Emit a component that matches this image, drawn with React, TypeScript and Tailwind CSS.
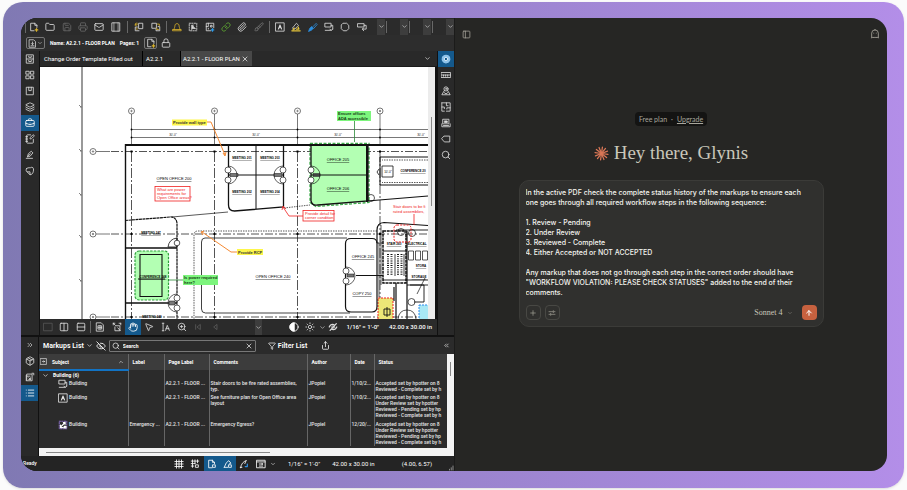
import type { ReactNode } from "react";
import {
  ArrowUp,
  Brush,
  BriefcaseBusiness,
  ChevronDown,
  ChevronUp,
  ChevronsLeft,
  ChevronsRight,
  Columns2,
  EyeOff,
  Filter,
  Folder,
  Ghost,
  Hand,
  Layers,
  Link,
  List,
  Lock,
  Mail,
  MousePointer2,
  NotebookPen,
  Package,
  PanelLeft,
  Paperclip,
  Plus,
  Printer,
  Rows2,
  Save,
  Search,
  Share,
  Sun,
  X,
  ZoomIn,
} from "lucide-react";

const PROMPT = `In the active PDF check the complete status history of the markups to ensure each
one goes through all required workflow steps in the following sequence:

1. Review - Pending
2. Under Review
3. Reviewed - Complete
4. Either Accepted or NOT ACCEPTED

Any markup that does not go through each step in the correct order should have
"WORKFLOW VIOLATION: PLEASE CHECK STATUSES" added to the end of their
comments.`;

const ICON = "size-[10px]";

function Glyph({ children, className = ICON }: { children: ReactNode; className?: string }) {
  return (
    <svg
      viewBox="0 0 24 24"
      fill="none"
      stroke="currentColor"
      strokeWidth="2"
      strokeLinecap="round"
      strokeLinejoin="round"
      className={className}
      aria-hidden="true"
    >
      {children}
    </svg>
  );
}

function Tool({
  label,
  children,
  active = false,
  className = "",
}: {
  label: string;
  children: ReactNode;
  active?: boolean;
  className?: string;
}) {
  return (
    <button
      type="button"
      aria-label={label}
      className={`flex h-4 min-w-0 items-center justify-center ${active ? "bg-[#14598c] text-white" : ""} ${className}`}
    >
      {children}
    </button>
  );
}

function Divider({ className = "" }: { className?: string }) {
  return <span className={`h-3 w-px shrink-0 bg-[#686868] ${className}`} />;
}

function NewFileIcon() {
  return (
    <Glyph>
      <path d="M12 21H4V3h10l5 5v5M14 3v5h5" />
      <path d="M18 16v6M15 19h6" stroke="#d8b12a" strokeWidth="3" />
    </Glyph>
  );
}

function PageIcon() {
  return (
    <Glyph>
      <rect x="3" y="2" width="18" height="20" />
      <path d="M7 2v20M17 2v20" strokeWidth="1.5" />
    </Glyph>
  );
}

function RotateLeftIcon() {
  return (
    <Glyph>
      <path d="M12 3h9v13h-9zM8 12H3v9h9" />
      <path d="M3 9V5h6M6 2 3 5l3 3M7 14v4" stroke="#d8b12a" />
    </Glyph>
  );
}

function RotateRightIcon() {
  return (
    <Glyph>
      <path d="M3 3h10v12H3zM17 11h4v10h-9v-3" />
      <path d="M15 5h5v4M14 14v4h4" stroke="#d8b12a" />
    </Glyph>
  );
}

function StampIcon() {
  return (
    <Glyph>
      <path d="M2 18h20v3H2zM5 18c0-4 2-5 2-9 0-3 2-5 5-5s5 2 5 5c0 4 2 5 2 9" stroke="#d8b12a" />
    </Glyph>
  );
}

function SelectIcon() {
  return (
    <Glyph>
      <rect x="3" y="3" width="18" height="18" strokeDasharray="3 3" />
      <path d="M9 8v10l3-3 5 1zM12 7v3" fill="currentColor" />
    </Glyph>
  );
}

function SnapshotIcon() {
  return (
    <Glyph>
      <path d="M14 21H3V3h18v11M8 3v8H3M14 8h3v4h-3zM8 15v2" />
      <path d="M18 16v6M15 19h6" stroke="#2d9be8" strokeWidth="3" />
    </Glyph>
  );
}

function TextBoxIcon({ className = ICON }: { className?: string }) {
  return (
    <Glyph className={className}>
      <rect x="2" y="2" width="20" height="20" />
      <path d="m8 17 4-10 4 10M9.500 14h5" strokeWidth="2.500" />
    </Glyph>
  );
}

function HighlightIcon() {
  return (
    <Glyph>
      <path d="M4 14 13 3l5 5-9 9z" stroke="#cfcfcf" />
      <path d="M2 21h20M5 18l3-3M13 17h6l-2-5" stroke="#e2c23a" strokeWidth="3" />
    </Glyph>
  );
}

function BluePenIcon() {
  return (
    <Glyph>
      <path d="M2 22c1-7 4-9 7-11l4 4c-3 4-6 6-11 7z" stroke="#2d8fe0" fill="#2d8fe0" />
      <path d="M12 11 20 3M14 15l8-9" stroke="#2d8fe0" />
    </Glyph>
  );
}

function CalloutIcon({ className = ICON }: { className?: string }) {
  return (
    <Glyph className={className}>
      <path d="M3 3h14v9H3zM3 20h14M17 8h4v9M14 17l3 3 4-3" />
    </Glyph>
  );
}

function PlanIcon() {
  return (
    <Glyph>
      <path d="M2 2h20v20h-9M8 22H2V2M2 12h6v4M13 2v7h4M22 14h-8v3" />
    </Glyph>
  );
}

function OctagonIcon() {
  return (
    <Glyph>
      <path d="M8 3h8l5 5v8l-5 5H8l-5-5V8z" />
    </Glyph>
  );
}

function ShapeArrowIcon() {
  return (
    <Glyph>
      <path d="M2 4h15v8H2zM17 8h5v9h-9M16 14l-3 3 3 4" />
    </Glyph>
  );
}

function ThumbnailsIcon() {
  return (
    <Glyph>
      <path d="M3 3h7v7H3zM14 3h7v7h-7zM3 14h7v7H3zM14 14h7v7h-7z" />
    </Glyph>
  );
}

function DrawerIcon() {
  return (
    <Glyph>
      <path d="M4 2h16v20H4zM4 12h16M9 5v3h6V5M9 15v3h6v-3" />
    </Glyph>
  );
}

function PenIcon() {
  return (
    <Glyph>
      <path d="M3 20h15M6 16l2-7 7-6 4 4-6 7zM8 14l5-5" />
    </Glyph>
  );
}

function BlobIcon() {
  return (
    <Glyph>
      <path d="M4 6c4-4 8 0 12-3 5 0 5 6 4 10-1 5-4 8-8 8v-7H5c-3-2-3-5-1-8zM5 14l7 7" />
    </Glyph>
  );
}

function GearIcon() {
  return (
    <Glyph>
      <circle cx="12" cy="12" r="9" fill="#8fc3ea" stroke="#8fc3ea" strokeDasharray="4 2" strokeWidth="3" />
      <circle cx="12" cy="12" r="4" fill="#14598c" stroke="#e8f4fd" />
    </Glyph>
  );
}

function RulerIcon() {
  return (
    <Glyph>
      <path d="M1 6h22v12H1zM1 12h22M6 12v3M11 12v3M16 12v3" />
    </Glyph>
  );
}

function PlacesIcon() {
  return (
    <Glyph>
      <circle cx="12" cy="7" r="5" />
      <circle cx="12" cy="7" r="1" />
      <path d="m8 11-6 10h20l-6-10M8 16l4 3 4-3" />
    </Glyph>
  );
}

function StudioIcon() {
  return (
    <Glyph>
      <path d="M5 3h14v11H5zM2 14v7h20v-7M6 18h12" />
      <path d="M9 7h6v4H9z" fill="currentColor" />
    </Glyph>
  );
}

function TagIcon() {
  return (
    <Glyph>
      <path d="M8 5h13v14H8l-6-7z" />
    </Glyph>
  );
}

function PageFitIcon() {
  return (
    <Glyph>
      <path d="M4 2h11l5 5v15H4zM8 9h8v8H8zM12 9v8M8 13h8" />
    </Glyph>
  );
}

function WidthFitIcon() {
  return (
    <Glyph>
      <path d="M3 3h4M3 3v4M3 3l5 5M21 3h-4M21 3v4M9 9h10v12H7v-9M14 14l6 7" />
    </Glyph>
  );
}

function TextSelectIcon() {
  return (
    <Glyph>
      <path d="M3 3h4M5 3v18M3 21h4M11 20l4-12 5 12M12 16h7" />
    </Glyph>
  );
}

function ContrastIcon() {
  return (
    <Glyph>
      <circle cx="12" cy="12" r="10" stroke="#fff" />
      <path d="M12 2a10 10 0 0 0 0 20z" fill="#fff" stroke="#fff" />
    </Glyph>
  );
}

function GridIcon() {
  return (
    <Glyph>
      <path d="M2 6h20M2 12h20M2 18h20M6 2v20M12 2v20M18 2v20" />
    </Glyph>
  );
}

function DimmerIcon() {
  return (
    <Glyph>
      <path d="M5 20 20 4M3 12c2-5 7-7 11-6M21 12c-2 5-6 7-11 6" strokeWidth="3" />
      <circle cx="12" cy="12" r="3" />
    </Glyph>
  );
}

function Carets() {
  return (
    <div className="flex flex-1 items-center justify-end">
      {["Line", "Fill", "Font", "More"].map((name, index) => (
        <div key={name} className={`flex items-center ${index === 3 ? "" : "mr-[13px]"}`}>
          <button type="button" aria-label={name} className="flex h-4 w-2 items-center justify-center bg-[#3d3d3d]">
            <ChevronDown className="size-[7px]" />
          </button>
          {index < 3 && <Divider className="ml-px" />}
        </div>
      ))}
    </div>
  );
}

function MainToolbar() {
  return (
    <div className="flex h-[17px] shrink-0 items-center bg-[#2b2b2b] pl-1">
      <Divider />
      <div className="grid w-[98px] shrink-0 grid-cols-6">
        <Tool label="New"><NewFileIcon /></Tool>
        <Tool label="Open"><Folder className={ICON} /></Tool>
        <Tool label="Save" className="text-[#666]"><Save className={ICON} /></Tool>
        <Tool label="Print" className="text-[#666]"><Printer className={ICON} /></Tool>
        <Tool label="Email"><Mail className={ICON} /></Tool>
        <Tool label="Page"><PageIcon /></Tool>
      </div>
      <Divider className="mx-[3px]" />
      <div className="grid w-[33px] shrink-0 grid-cols-2">
        <Tool label="Rotate left"><RotateLeftIcon /></Tool>
        <Tool label="Rotate right"><RotateRightIcon /></Tool>
      </div>
      <Divider className="mx-[2px]" />
      <div className="grid w-[98px] shrink-0 grid-cols-6">
        <Tool label="Stamp"><StampIcon /></Tool>
        <Tool label="Select"><SelectIcon /></Tool>
        <Tool label="Snapshot"><SnapshotIcon /></Tool>
        <Tool label="Hyperlink" className="text-[#5fa832]"><Link className={ICON} /></Tool>
        <Tool label="Attach"><Paperclip className={ICON} /></Tool>
        <Tool label="Format painter" className="text-[#777]"><Brush className={ICON} /></Tool>
      </div>
      <Divider className="mx-[2px]" />
      <div className="grid w-[98px] shrink-0 grid-cols-6">
        <Tool label="Text box"><TextBoxIcon /></Tool>
        <Tool label="Highlight"><HighlightIcon /></Tool>
        <Tool label="Pen"><BluePenIcon /></Tool>
        <Tool label="Callout"><CalloutIcon /></Tool>
        <Tool label="Polygon"><OctagonIcon /></Tool>
        <Tool label="Shape"><ShapeArrowIcon /></Tool>
      </div>
      <Carets />
    </div>
  );
}

function FileBar() {
  return (
    <div className="flex h-4 shrink-0 items-center bg-[#2d2d2d] pl-[5px]">
      <button type="button" aria-label="File menu" className="flex h-[12px] w-[19px] shrink-0 items-center justify-between rounded-[2px] border border-[#777] px-px">
        <Glyph className="size-[9px]">
          <path d="M4 2h11l5 5v15H4zM8 18h8M12 8v6M9 12l3 3 3-3" />
        </Glyph>
        <ChevronDown className="size-[6px]" />
      </button>
      <span className="ml-[5px] text-[5px] font-bold text-white">Name: A2.2.1 - FLOOR PLAN</span>
      <span className="ml-[5px] text-[5px] font-bold text-white">Pages: 1</span>
      <button type="button" aria-label="Page setup" className="ml-[5px] flex h-[12px] w-[13px] items-center justify-center rounded-[2px] border border-[#777]">
        <NewFileIcon />
      </button>
      <button type="button" aria-label="Lock" className="ml-1 flex"><Lock className={ICON} /></button>
    </div>
  );
}

function Tabs() {
  return (
    <div role="tablist" className="flex h-4 shrink-0 items-stretch border-b border-[#1a1a1a] bg-[#292929] text-white">
      <button type="button" role="tab" aria-selected="false" className="w-[103px] border-r border-black pl-1 text-left">Change Order Template Filled out</button>
      <button type="button" role="tab" aria-selected="false" className="w-[38px] border-r border-black pl-[3px] text-left">A2.2.1</button>
      <button type="button" role="tab" aria-selected="true" className="flex w-[71px] items-center justify-between bg-[#484848] pr-[3px] pl-[2px]">
        A2.2.1 - FLOOR PLAN
        <X className="size-[8px] shrink-0" />
      </button>
      <button type="button" aria-label="All tabs" className="mr-[6px] ml-auto"><ChevronDown className="size-[7px]" /></button>
    </div>
  );
}

function RoomLabel({ x, y, small = false, children }: { x: number; y: number; small?: boolean; children: string }) {
  return (
    <text
      x={x}
      y={y}
      textAnchor="middle"
      fontSize={small ? "3" : "4"}
      fontWeight={small ? "700" : "400"}
      fill="#000"
      textDecoration="underline"
    >
      {children}
    </text>
  );
}

const DOORS = [
  { x: 228, y: 175, side: 1 },
  { x: 283, y: 175, side: -1 },
  { x: 311, y: 175, side: 1 },
  { x: 346, y: 276, side: 1 },
  { x: 177, y: 303, side: -1 },
];

function FloorPlan() {
  return (
    <svg
      viewBox="40 67 395 252"
      preserveAspectRatio="xMinYMin slice"
      className="block h-full w-full bg-white"
      fontFamily="'Liberation Sans', Arial, sans-serif"
      role="img"
      aria-label="Floor plan A2.2.1"
    >
      <path d="M82 67V319" stroke="#777" strokeWidth="1.500" />
      {[107, 151, 195, 237, 281].map((y) => (
        <path key={y} d={`M79 ${y - 2}l2 2M80 ${y}h2`} stroke="#666" strokeWidth=".8" />
      ))}

      {/* column grid */}
      <g fill="none" stroke="#555" strokeWidth=".8">
        {[131.5, 214.5, 297.5, 380].map((x) => (
          <g key={x}>
            <circle cx={x} cy="111" r="3" />
            <circle cx={x} cy="111" r=".7" />
            <path d={`M${x} 114V145`} />
            <path d={`M${x} 152V319`} strokeDasharray="10 2 2 2" strokeWidth="1" />
          </g>
        ))}
        {[151.5, 234, 317].map((y) => (
          <g key={y}>
            <circle cx="93" cy={y} r="3" />
            <circle cx="93" cy={y} r=".7" />
            <path d={`M96 ${y}h14`} />
            <path d={`M111 ${y}H428`} strokeDasharray="8 2 2 2" strokeWidth="1" />
          </g>
        ))}
        <path d="M131 129.500H428M131 137.500H428" />
      </g>
      {[131.5, 214.5, 297.5, 380].map((x) => (
        <g key={x}>
          <circle cx={x} cy="129.500" r=".9" />
          <circle cx={x} cy="137.500" r=".9" />
          <rect x={x - 1} y="150.500" width="2" height="2" />
          <rect x={x - 1} y="233" width="2" height="2" />
          <rect x={x - 1} y="316" width="2" height="2" />
        </g>
      ))}
      {[173, 256, 338, 421].map((x) => (
        <text key={x} x={x} y="135.500" textAnchor="middle" fontSize="3" fill="#222">30'-0"</text>
      ))}

      {/* marked-up areas */}
      <path d="M311 144.500h57v57l-50 4-7-3z" fill="#b3ffb3" />
      <path d="M310 143.500h59v59l-53 4-6-4z" fill="none" stroke="#3fae4c" strokeWidth="1.300" strokeDasharray="3 1.500" />
      <rect x="135" y="251" width="33.500" height="49" rx="4" fill="#b3ffb3" stroke="#2e9e3c" strokeWidth="1.200" strokeDasharray="2.500 1.200" />
      <rect x="378" y="298" width="15" height="24" fill="#ece777" stroke="#f02020" strokeDasharray="2 1" />
      <rect x="419" y="305" width="10" height="16" fill="#a9e8f5" stroke="#2a8af0" strokeDasharray="2 1" />

      {/* walls */}
      <g fill="none" stroke="#111">
        <path d="M125 145H428" strokeWidth="2" />
        <path d="M125.500 144V319" strokeWidth="1.400" />
        <path d="M125 220.500l45-3.500q6-.500 7 6V319" strokeWidth="1.200" strokeDasharray="3 .5" />
        <path d="M172 217l56-5" strokeWidth=".7" />
        <path d="M125 248h52M125 303h52" strokeWidth="1.300" />
        <path d="M228.500 145v60q0 6 6 6l49-4V145" strokeWidth="1.300" />
        <path d="M256 145v64M228 175h55" strokeWidth="1" />
        <path d="M230 173.500h8v3h-8zM274 173.500h8v3h-8zM313 173.500h7v3h-7zM347 274h7v3h-7zM169 301h6v4h-6z" fill="#777" strokeWidth=".5" />
        <path d="M311 145v56q1 5 7 4l50-4V145" strokeWidth="1.300" />
        <path d="M311 175h57" strokeWidth="1" />
        <path d="M367 145v57" strokeWidth="2" />
        <path d="M367 201l61-5" strokeWidth="1.200" />
        <path d="M284 208l26-3" strokeWidth=".7" strokeDasharray="1.500 1" />
        <path d="M428 157h-48v28h48" strokeWidth="1" />
        <path d="M428 160h-46M428 182.500h-46" strokeWidth=".7" strokeDasharray="1.500 1" />
        <path d="M382 166h11v11h-11zM379 169l-2 3 2 3" strokeWidth=".8" fill="#fff" />
        <path d="M140 254.500h22v42h-22zM138 279h27" strokeWidth="1.100" />
        <path d="M377 231H198q-4 0-4 4v84" strokeWidth=".7" strokeDasharray="1.500 1" />
        <path d="M347 238H205q-3.500 0-3.500 4v67q0 4 4 4H350" strokeWidth=".8" />
        <path d="M351 238.500h21q5 0 5 5v63q0 5.500-5 5.500h-21q-5.500 0-5.500-5.500v-63q0-5 5.500-5z" strokeWidth="1.200" />
        <path d="M356 275.500h27" strokeWidth="1" />
        <path d="M377 243v-13q0-7 7-7.500l44 3" strokeWidth="1.200" />
        <path d="M379 297v-54M381 225v60" strokeWidth=".7" />
        <path d="M383 231h23v52h-23z" strokeWidth="1.500" strokeDasharray="3 .7" />
        <path d="M407 231v88M396 283v36M394 287v14" strokeWidth="1.200" />
        <path d="M383 280h45M407 285h21M396 230h32M383 251h24M410 285h14v17h-10M383 243h-6" strokeWidth=".9" />
        <path d="M388 254v22M391.500 254v22M398 254v22M401.500 254v22" strokeWidth="2" strokeDasharray=".9 1.300" />
        <path d="M395 254v22M404 254v22" strokeWidth=".8" />
        <path d="M408.500 251h5v9h-5zM415.500 251h5v9h-5zM422.500 251h5v9h-5z" strokeWidth=".7" />
        <path d="M425 278l-8 16M398 319q1-9 9-9M407 310q8 0 9 9" strokeWidth=".7" />
        <circle cx="411.500" cy="302" r="3.500" strokeWidth=".7" />
        <circle cx="371" cy="198" r="3.500" strokeWidth=".7" />
        <circle cx="401" cy="232" r="3.500" strokeWidth=".7" />
        <circle cx="412" cy="233" r="3.500" strokeWidth=".7" />
        <path d="M177 238q-8 1-9 9h9z" strokeWidth=".8" />
        <circle cx="177" cy="243" r="2.800" fill="#fff" strokeWidth=".7" />
        <path d="M384 309h6v6h-6zM387 307v10" strokeWidth=".9" />
      </g>
      {DOORS.map((door) => (
        <g key={`${door.x}-${door.y}`} fill="none" stroke="#222" strokeWidth=".7">
          <path d={`M${door.x} ${door.y - 9}a9 9 0 0 ${door.side > 0 ? 1 : 0} 0 18`} />
          <circle cx={door.x} cy={door.y - 5} r="3" fill="#fff" />
          <circle cx={door.x} cy={door.y + 5} r="3" fill="#fff" />
        </g>
      ))}

      <RoomLabel x={174} y={180}>OPEN OFFICE 200</RoomLabel>
      <RoomLabel x={242} y={159} small>MEETING 201</RoomLabel>
      <RoomLabel x={270} y={159} small>MEETING 203</RoomLabel>
      <RoomLabel x={242} y={193} small>MEETING 202</RoomLabel>
      <RoomLabel x={270} y={193} small>MEETING 204</RoomLabel>
      <RoomLabel x={338} y={161}>OFFICE 205</RoomLabel>
      <RoomLabel x={338} y={190}>OFFICE 206</RoomLabel>
      <RoomLabel x={413} y={172} small>CONFERENCE 20</RoomLabel>
      <RoomLabel x={151} y={234} small>MEETING 247</RoomLabel>
      <RoomLabel x={153} y={278} small>CONFERENCE 248</RoomLabel>
      <RoomLabel x={152} y={318} small>MEETING 249</RoomLabel>
      <RoomLabel x={273} y={278}>OPEN OFFICE 240</RoomLabel>
      <RoomLabel x={363} y={258}>OFFICE 245</RoomLabel>
      <RoomLabel x={362} y={295}>COPY 250</RoomLabel>
      <RoomLabel x={394} y={245} small>STAIR 260</RoomLabel>
      <RoomLabel x={417} y={245} small>ELECTRICAL</RoomLabel>
      <RoomLabel x={421} y={267} small>STORA</RoomLabel>
      <RoomLabel x={419} y={278} small>STORAGE</RoomLabel>
      <text x="388" y="173" textAnchor="middle" fontSize="3">10'-0"</text>

      {/* comments */}
      <g fontSize="4" fontWeight="700">
        <rect x="172" y="119.500" width="35" height="6" fill="#fdf64b" />
        <text x="173" y="124" fill="#333">Provide wall type</text>
        <path d="M207 122h4l14 33M223 153l2 3 1-4" fill="none" stroke="#f58a33" />
        <rect x="337" y="111" width="34" height="10" fill="#7df57d" />
        <text x="338" y="115" fill="#143d14">Ensure offices</text>
        <text x="338" y="120" fill="#143d14">ADA accessible</text>
        <path d="M354.500 121v21" stroke="#2c8a38" strokeWidth=".8" />
        <rect x="183" y="275" width="35" height="10" fill="#7df57d" />
        <text x="184" y="279" fill="#143d14">Is power required</text>
        <text x="184" y="284" fill="#143d14">here?</text>
        <path d="M168 280h15" stroke="#2c8a38" strokeWidth=".8" />
        <rect x="237" y="249" width="26" height="6" fill="#fdf64b" />
        <text x="238" y="254" fill="#333">Provide RCP</text>
        <path d="M237 252h-6l-29-20M204 231l-3 1 2 3" fill="none" stroke="#f58a33" />
      </g>
      <g fontSize="4" fill="#f02020">
        <rect x="155" y="186.500" width="35" height="14.500" fill="#fff" stroke="#f02020" strokeWidth=".8" />
        <text x="157" y="191">What are power</text>
        <text x="157" y="195">requirements for</text>
        <text x="157" y="199">Open Office areas?</text>
        <rect x="303" y="210.500" width="31" height="10.500" fill="#fff" stroke="#f02020" strokeWidth=".8" />
        <text x="305" y="215">Provide detail for</text>
        <text x="305" y="219">corner condition</text>
        <path d="M303 216h-14l-6-9M282 210l1-4 3 3" fill="none" stroke="#f02020" strokeWidth=".8" />
        <text x="393" y="208">Stair doors to be fi</text>
        <text x="393" y="213">rated assemblies,</text>
        <path d="M414 214v11" stroke="#f02020" strokeWidth=".8" />
        <rect x="394" y="225" width="17" height="17" rx="3" fill="none" stroke="#f02020" strokeWidth="1" strokeDasharray="2 1.200" />
      </g>

      {/* scroll bar */}
      <rect x="428" y="67" width="7" height="252" fill="#ececec" />
      <path d="M431.500 117V206" stroke="#888" />
    </svg>
  );
}

function LeftRail() {
  return (
    <nav aria-label="Panels" className="flex w-[19px] shrink-0 flex-col border-r border-[#111] bg-[#292929]">
      <Tool label="File access"><DrawerIcon /></Tool>
      <Tool label="Thumbnails"><ThumbnailsIcon /></Tool>
      <Tool label="Bookmarks"><Glyph><path d="M4 3h16v18H4zM9 3v8h6V3" /></Glyph></Tool>
      <Tool label="Layers"><Layers className={ICON} /></Tool>
      <Tool label="Tool chest" active><BriefcaseBusiness className={ICON} /></Tool>
      <Tool label="Forms"><NotebookPen className={ICON} /></Tool>
      <Tool label="Signatures"><PenIcon /></Tool>
      <Tool label="Shapes"><BlobIcon /></Tool>
    </nav>
  );
}

function RightRail() {
  return (
    <nav aria-label="Tools" className="flex w-[17px] shrink-0 flex-col border-l border-[#111] bg-[#292929]">
      <Tool label="Properties" active><GearIcon /></Tool>
      <Tool label="Measurements"><RulerIcon /></Tool>
      <Tool label="Places"><PlacesIcon /></Tool>
      <Tool label="Spaces"><PlanIcon /></Tool>
      <Tool label="Studio"><StudioIcon /></Tool>
      <Tool label="Tags"><TagIcon /></Tool>
      <Tool label="Search"><Search className={ICON} /></Tool>
    </nav>
  );
}

function ViewBar() {
  return (
    <div className="flex h-4 shrink-0 items-center bg-[#2b2b2b]">
      <div className="grid w-[49px] shrink-0 grid-cols-3">
        <Tool label="Single pane" className="text-[#555]"><Glyph><path d="M2 3h20v18H2z" /></Glyph></Tool>
        <Tool label="Split vertical"><Columns2 className={ICON} /></Tool>
        <Tool label="Split horizontal"><Rows2 className={ICON} /></Tool>
      </div>
      <Divider className="mr-px ml-px" />
      <div className="grid w-[131px] shrink-0 grid-cols-8">
        <Tool label="Fit page"><PageFitIcon /></Tool>
        <Tool label="Fit width"><WidthFitIcon /></Tool>
        <Tool label="Pan" active><Hand className={ICON} /></Tool>
        <Tool label="Select"><MousePointer2 className={ICON} /></Tool>
        <Tool label="Select text"><TextSelectIcon /></Tool>
        <Tool label="Zoom"><ZoomIn className={ICON} /></Tool>
        <Tool label="First page" className="text-[#666]"><Glyph className="size-[8px]"><path d="M5 5v14M18 5 9 12l9 7z" /></Glyph></Tool>
        <Tool label="Previous page" className="text-[#666]"><Glyph className="size-[8px]"><path d="M17 5 8 12l9 7z" /></Glyph></Tool>
      </div>
      <button type="button" aria-label="Pages" className="ml-auto flex h-4 w-[7px] items-center justify-center bg-[#3d3d3d]"><ChevronDown className="size-[7px]" /></button>
      <div className="ml-6 flex items-center">
        <Tool label="Contrast" className="w-4"><ContrastIcon /></Tool>
        <Tool label="Brightness" className="w-4"><Sun className={ICON} /></Tool>
        <Tool label="More brightness" className="w-2"><ChevronDown className="size-[7px]" /></Tool>
        <Tool label="Dim" className="w-[14px]"><DimmerIcon /></Tool>
      </div>
      <span className="ml-[6px] font-medium text-white">1/16" = 1'-0"</span>
      <span className="mr-[5px] ml-[10px] font-medium text-white">42.00 x 30.00 in</span>
    </div>
  );
}

const ROWS = [
  {
    icon: <CalloutIcon />,
    label: "",
    page: "A2.2.1 - FLOOR ...",
    comments: ["Stair doors to be fire rated assemblies,", "typ."],
    date: "1/10/2...",
    status: ["Accepted set by hpotter on 8", "Reviewed - Complete set by h"],
    height: "h-[14px]",
  },
  {
    icon: <TextBoxIcon />,
    label: "",
    page: "A2.2.1 - FLOOR ...",
    comments: ["See furniture plan for Open Office area", "layout"],
    date: "1/10/2...",
    status: [
      "Accepted set by hpotter on 8",
      "Under Review set by hpotter",
      "Reviewed - Pending set by hp",
      "Reviewed - Complete set by h",
    ],
    height: "h-[27px]",
  },
  {
    icon: (
      <Glyph>
        <path d="M3 3h18v18H3z" stroke="#9a7be0" strokeDasharray="3 3" />
        <path d="M6 17 17 6M6 12v6h6M17 10V6h-4M15 15h4v4h-4z" stroke="#fff" strokeWidth="3" />
      </Glyph>
    ),
    label: "Emergency ...",
    page: "A2.2.1 - FLOOR ...",
    comments: ["Emergency Egress?"],
    date: "12/20/...",
    status: [
      "Accepted set by hpotter on 8",
      "Under Review set by hpotter",
      "Reviewed - Pending set by hp",
      "Reviewed - Complete set by h",
    ],
    height: "h-[26px]",
  },
];

const CELL = "border-l border-[#666] pt-px pl-px whitespace-nowrap";

function Lines({ items }: { items: string[] }) {
  return items.map((line) => <div key={line}>{line}</div>);
}

function MarkupsTable() {
  return (
    <div className="flex min-h-0 flex-1">
      <div className="flex min-w-0 flex-1 flex-col bg-[#2b2b2b]">
        <table className="w-full table-fixed border-collapse text-left text-[5px] leading-[6px] font-medium text-[#e6e6e6]">
          <colgroup>
            <col className="w-[89px]" />
            <col className="w-[36px]" />
            <col className="w-[45px]" />
            <col className="w-[98px]" />
            <col className="w-[43px]" />
            <col className="w-[24px]" />
            <col />
          </colgroup>
          <thead className="bg-[#3c3c3c] text-white">
            <tr className="h-4">
              <th className="border-b-2 border-[#1273c4] font-bold">
                <div className="flex items-center pr-1 pl-px">
                  <Glyph className="size-[7px]"><path d="M2 2h20v20H2zM8 12h8M13 9l3 3-3 3" /></Glyph>
                  <span className="ml-[5px]">Subject</span>
                  <ChevronUp className="ml-auto size-[6px]" />
                </div>
              </th>
              {["Label", "Page Label", "Comments", "Author", "Date", "Status"].map((title) => (
                <th key={title} className="border-l border-[#666] pl-1 font-bold whitespace-nowrap">{title}</th>
              ))}
            </tr>
          </thead>
          <tbody>
            <tr className="h-[9px]">
              <th scope="rowgroup" className="font-bold text-white">
                <div className="flex items-center pl-[3px]">
                  <ChevronDown className="size-[7px]" />
                  <span className="ml-1">Building (6)</span>
                </div>
              </th>
              {[0, 1, 2, 3, 4, 5].map((index) => (
                <td key={index} className="border-l border-[#666]" />
              ))}
            </tr>
            {ROWS.map((row) => (
              <tr key={row.status.length + row.comments[0]} className={`${row.height} align-top`}>
                <td>
                  <div className="flex items-start gap-px pl-[19px]">
                    {row.icon}
                    <span className="pt-px">Building</span>
                  </div>
                </td>
                <td className={CELL}>{row.label}</td>
                <td className={CELL}>{row.page}</td>
                <td className={CELL}><Lines items={row.comments} /></td>
                <td className={CELL}>JPopiel</td>
                <td className={CELL}>{row.date}</td>
                <td className={CELL}><Lines items={row.status} /></td>
              </tr>
            ))}
          </tbody>
        </table>
        <div className="mt-auto flex h-2 shrink-0 items-center bg-[#f3f3f3] pl-[7px]">
          <div className="h-px w-[224px] bg-[#888]" />
        </div>
      </div>
      <div className="flex w-[7px] shrink-0 justify-center bg-[#f3f3f3] pt-2">
        <div className="h-[14px] w-px bg-[#888]" />
      </div>
    </div>
  );
}

function MarkupsPanel() {
  return (
    <section aria-label="Markups List" className="flex h-[119px] shrink-0">
      <nav aria-label="List panels" className="flex w-[18px] shrink-0 flex-col border-r border-[#111] bg-[#292929]">
        <Tool label="Expand"><ChevronsRight className="size-[8px]" /></Tool>
        <Tool label="Model tree"><Package className={ICON} /></Tool>
        <Tool label="Compare"><Glyph><path d="M5 5h12v16H5zM5 10h7M17 3h4v4M9 14l4 4M13 14v4H9M3 8v13" /></Glyph></Tool>
        <Tool label="Markups" active><List className={ICON} /></Tool>
      </nav>
      <div className="flex min-w-0 flex-1 flex-col">
        <div className="flex h-[17px] shrink-0 items-center bg-[#2b2b2b] pr-1 pl-[4px] text-[7px] text-white">
          <button type="button" className="flex items-center gap-[2px] font-semibold">
            Markups List
            <ChevronDown className="size-[7px]" />
          </button>
          <button type="button" aria-label="Hide markups" className="ml-[3px]"><EyeOff className={ICON} /></button>
          <label className="ml-[3px] flex h-[12px] w-[147px] items-center rounded-[1px] border border-[#777] px-[2px]">
            <Search className="size-[8px] shrink-0" />
            <input aria-label="Search markups" placeholder="Search" className="ml-[3px] min-w-0 flex-1 bg-transparent text-[5px] font-bold placeholder:text-white" />
            <X className="size-[8px] shrink-0" />
          </label>
          <button type="button" className="ml-3 flex items-center gap-[2px] font-semibold">
            <Filter className="size-[8px]" />
            Filter List
          </button>
          <button type="button" aria-label="Export" className="ml-[14px]"><Share className="size-[9px]" /></button>
          <button type="button" aria-label="Collapse" className="ml-auto"><ChevronsLeft className="size-[7px]" /></button>
        </div>
        <MarkupsTable />
      </div>
    </section>
  );
}

function StatusBar() {
  return (
    <footer className="flex h-[15px] shrink-0 items-center bg-[#242424] pl-[2px] text-white">
      <span className="w-[148px] pb-px text-[5px] font-medium">Ready</span>
      <div className="grid w-[98px] shrink-0 grid-cols-6">
        <Tool label="Grid"><GridIcon /></Tool>
        <Tool label="Snap to grid"><Glyph><path d="M3 5h18M3 11h9M3 17h6M6 2v18M12 2v9M18 2v7M14 14h6v6h-6z" /></Glyph></Tool>
        <Tool label="Snap to content" active><Glyph><path d="M12 21H4V3h9l5 5v3M13 3v5h5M14 14h6v6h-6z" /></Glyph></Tool>
        <Tool label="Snap to markup" active><Glyph><path d="M3 20 8 9l6-5 5 6-4 2M3 20h8M14 14h6v6h-6z" /></Glyph></Tool>
        <Tool label="Reuse"><Glyph><path d="M4 21C5 12 10 6 17 4M17 4l-3 7M7 20H3" /><path d="M20 12v6h-5" stroke="#2d8fe0" strokeWidth="3" /></Glyph></Tool>
        <Tool label="Sync"><Glyph><path d="M2 3h20v18H2zM2 7h20M8 12h8M14 10l2 2-2 2M16 17H8" /></Glyph></Tool>
      </div>
      <Tool label="Sync options" className="w-[7px]"><ChevronDown className="size-[6px]" /></Tool>
      <span className="ml-[12px]">1/16" = 1'-0"</span>
      <span className="ml-[12px]">42.00 x 30.00 in</span>
      <span className="mr-[16px] ml-auto">(4.00, 6.57)</span>
      <Glyph className="size-[6px] self-end text-[#aaa]"><path d="M20 4v16M13 11v9M6 17v3" strokeWidth="3" /></Glyph>
    </footer>
  );
}

function DrawingApp() {
  return (
    <section className="flex min-w-0 flex-col bg-[#111] font-[Roboto,'Open_Sans',sans-serif] text-[6px] leading-[8px] text-[#dcdcdc]">
      <MainToolbar />
      <FileBar />
      <div className="flex min-h-0 flex-1">
        <LeftRail />
        <div className="flex min-w-0 flex-1 flex-col">
          <Tabs />
          <div className="min-h-0 flex-1 pr-[2px]"><FloorPlan /></div>
          <ViewBar />
        </div>
        <RightRail />
      </div>
      <div className="h-[2px] shrink-0 bg-[#111]" />
      <MarkupsPanel />
      <StatusBar />
    </section>
  );
}

function Sunburst() {
  return (
    <svg viewBox="0 0 30 30" className="size-[15px]" stroke="#d97757" strokeWidth="2.500" strokeLinecap="round" aria-hidden="true">
      {[0, 30, 60, 90, 120, 150, 180, 210, 240, 270, 300, 330].map((angle) => (
        <path key={angle} d="M15 15V2" transform={`rotate(${angle + 8} 15 15)`} />
      ))}
    </svg>
  );
}

function ChatApp() {
  return (
    <main className="flex min-w-0 flex-col border-l border-[#1b1b1a] bg-[#262624] font-[Inter,'Open_Sans',sans-serif] text-[#f5f4ef]">
      <div className="flex items-center justify-between px-[7px] pt-[11px] text-[#a8a69c]">
        <button type="button" aria-label="Toggle sidebar"><PanelLeft className="size-[9px]" /></button>
        <button type="button" aria-label="Incognito chat"><Ghost className="size-[10px]" /></button>
      </div>
      <div className="mx-auto mt-[73px] flex w-[305px] max-w-full flex-col items-center">
        <p className="flex h-[14px] items-center gap-1 rounded-[4px] bg-[#141413] px-1 font-[Lato,sans-serif] text-[7px] text-[#a8a69c]">
          <span>Free plan</span>
          <span>·</span>
          <a href="#upgrade" className="underline">Upgrade</a>
        </p>
        <h1 className="mt-[14px] flex h-[26px] items-center gap-[5px] font-['Liberation_Serif',serif] text-[19px] leading-[26px] text-[#c9c7ba]">
          <Sunburst />
          Hey there, Glynis
        </h1>
        <form className="mt-[14px] w-full rounded-[10px] border border-[#3b3b38] bg-[#30302e] px-[6px] pt-[7px] pb-[6px]">
          <textarea
            aria-label="Message"
            rows={11}
            defaultValue={PROMPT}
            className="block w-full resize-none overflow-hidden bg-transparent text-[7px] leading-[10px] font-medium whitespace-pre outline-none"
          />
          <div className="mt-[7px] flex items-center gap-1 text-[#a8a69c]">
            <button type="button" aria-label="Attach" className="flex size-[15px] items-center justify-center rounded-[4px] border border-[#484844]"><Plus className="size-[8px]" /></button>
            <button type="button" aria-label="Tools" className="flex size-[15px] items-center justify-center rounded-[4px] border border-[#484844]">
              <Glyph className="size-[8px]"><path d="M3 8h11M18 8h3M16 5v6M3 16h3M10 16h11M8 13v6" /></Glyph>
            </button>
            <button type="button" className="ml-auto flex items-center gap-1 font-['Liberation_Serif',serif] text-[8px] text-[#c9c7ba]">
              Sonnet 4
              <ChevronDown className="size-[6px] text-[#8a8880]" />
            </button>
            <button type="submit" aria-label="Send" className="ml-[5px] flex size-[15px] items-center justify-center rounded-[4px] bg-[#c6613f] text-white"><ArrowUp className="size-[8px]" strokeWidth={3} /></button>
          </div>
        </form>
      </div>
    </main>
  );
}

export default function App() {
  return (
    <div className="flex min-h-screen bg-[#fbfbfb] px-[3px] py-[2px]">
      <div className="flex flex-1 rounded-[20px] bg-linear-to-r from-[#8079b3] to-[#b38ee8] pt-4 pr-[17px] pb-[17px] pl-[18px] shadow-sm">
        <div className="grid flex-1 grid-cols-2 overflow-hidden rounded-[16px]">
          <DrawingApp />
          <ChatApp />
        </div>
      </div>
    </div>
  );
}
